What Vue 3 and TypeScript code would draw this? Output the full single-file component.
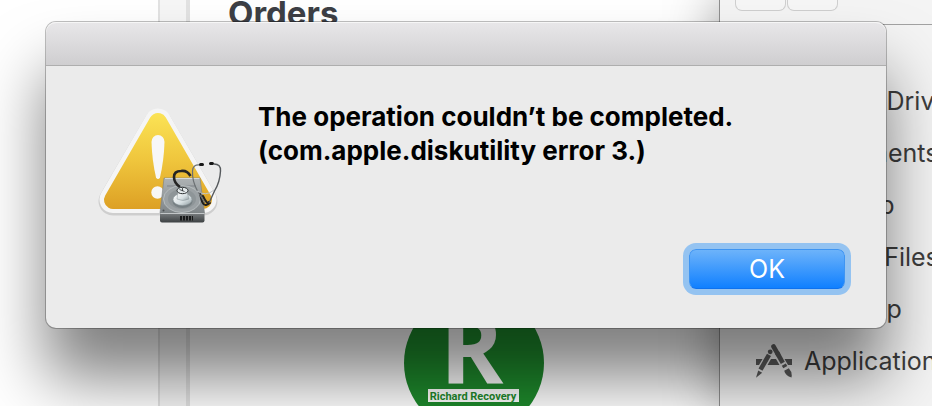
<script setup lang="ts">
import { ref } from 'vue'

const open = ref(true)
const places: string[] = ['iCloud Drive', 'Documents', 'AirDrop', 'All My Files', 'Desktop', 'Applications']
</script>

<template>
  <main class="desktop">
    <section class="browser">
      <div class="page-edge"></div>
      <div class="gutter"></div>
      <article class="page">
        <h2>Orders</h2>
        <svg class="brand" viewBox="0 0 140 140" role="img" aria-label="Richard Recovery">
          <circle cx="70" cy="70" r="70" fill="#1e8a2c" />
          <text x="36" y="91" class="brand-letter">R</text>
          <rect x="24" y="96" width="91" height="13" fill="#fff" />
          <text x="69" y="107" text-anchor="middle" class="brand-name">Richard Recovery</text>
        </svg>
      </article>
    </section>

    <aside class="finder">
      <div class="toolbar">
        <button type="button" aria-label="Back"></button>
        <button type="button" aria-label="Forward"></button>
      </div>
      <ul class="places">
        <li v-for="place in places" :key="place">
          <span class="place-icon">
            <svg v-if="place === 'Applications'" viewBox="0 0 36 34" aria-hidden="true">
              <g fill="#5c5c5c">
                <path d="M0 15h6.500L3 21H0zM15 15h5l3.500 6h-12zM28.500 15H36v6h-4z" />
                <circle cx="14.200" cy="7.800" r="2.400" />
                <path d="M2.200 26.500l4 2.300L0 33.800z" />
                <path d="M28.200 26.800l4.600-2.600Q36.500 28 35.500 33.500 29.500 32 28.200 26.800z" />
              </g>
              <g fill="none" stroke="#5c5c5c" stroke-width="4.600">
                <path d="M13 10.800L4.500 25.600M27.800 20.600L29.300 23.200" />
                <path d="M21 8.500L26.800 18.800" />
                <path d="M17.500 2.500L22 10.300" stroke-linecap="round" />
              </g>
            </svg>
          </span>
          <span>{{ place }}</span>
        </li>
      </ul>
    </aside>

    <section v-if="open" class="dialog" role="alertdialog" aria-labelledby="message">
      <header class="titlebar"></header>
      <div class="body">
        <div class="notice">
          <svg class="alert" viewBox="96 100 128 128" aria-hidden="true">
            <defs>
              <linearGradient id="warn" gradientUnits="userSpaceOnUse" x1="0" y1="113" x2="0" y2="209">
                <stop offset="0" stop-color="#fbe355" />
                <stop offset="0.500" stop-color="#efc53c" />
                <stop offset="1" stop-color="#dda024" />
              </linearGradient>
              <linearGradient id="metal" x1="0" y1="0" x2="0" y2="1">
                <stop offset="0" stop-color="#aeb3b5" />
                <stop offset="1" stop-color="#7f8588" />
              </linearGradient>
              <linearGradient id="front" x1="0" y1="0" x2="0" y2="1">
                <stop offset="0" stop-color="#777b7d" />
                <stop offset="1" stop-color="#3c4042" />
              </linearGradient>
              <linearGradient id="chrome" x1="0" y1="0" x2="1" y2="1">
                <stop offset="0" stop-color="#fff" />
                <stop offset="0.600" stop-color="#d5dee1" />
                <stop offset="1" stop-color="#8b979b" />
              </linearGradient>
            </defs>
            <g stroke-linejoin="round">
              <path d="M158 123L113 200H203Z" fill="none" stroke="#000" stroke-opacity=".12" stroke-width="29" transform="translate(0 1)" />
              <path d="M158 122L113 199.500H203Z" fill="#f5f5f5" stroke="#f5f5f5" stroke-width="27" />
              <path d="M158 122L113 200H203Z" fill="url(#warn)" stroke="url(#warn)" stroke-width="18" />
            </g>
            <path d="M151.500 142a6.500 7 0 0 1 13 0Q164 160 160 177.500q-2 3-4 0Q152 160 151.500 142z" fill="#f7f7f7" />
            <circle cx="157.500" cy="192.500" r="6.200" fill="#f7f7f7" />

            <path d="M164 178h36l4.500 35h-44.500z" fill="url(#metal)" stroke="#7a7f81" stroke-width=".6" />
            <path d="M165 178.500h34.500" stroke="#d5d9da" stroke-width="1" />
            <path d="M167 186h29" stroke="#8b9194" stroke-width="1.500" />
            <ellipse cx="182" cy="199" rx="18.500" ry="13.500" fill="#9ba1a4" stroke="#b6bcbe" stroke-width="1" />
            <ellipse cx="182" cy="199" rx="14" ry="10" fill="#8e9598" />
            <circle cx="163.500" cy="210.500" r="1" fill="#4c5052" />
            <path d="M160 213.500h44.500v7q0 2-2 2H162q-2 0-2-2z" fill="url(#front)" />
            <path d="M160.500 213.500h43.500" stroke="#c2c6c8" stroke-width="1" />
            <path d="M180 216h13v4.500h-13z" fill="#161819" />
            <path d="M182.500 216v4.500M185.500 216v4.500M188.500 216v4.500M191.500 216v4.500" stroke="#777" stroke-width=".7" />

            <path d="M180 187Q174 183 174 177T181 171Q187 170 190.500 176" fill="none" stroke="#242424" stroke-width="2.600" />
            <ellipse cx="182.500" cy="201.500" rx="10" ry="6.500" fill="#606b6f" opacity=".5" />
            <ellipse cx="182.500" cy="199.500" rx="9.500" ry="6" fill="url(#chrome)" stroke="#8b979b" stroke-width=".5" />
            <path d="M178 192h9l2 7q-6 3-12 0z" fill="url(#chrome)" stroke="#8b979b" stroke-width=".5" />
            <ellipse cx="182.500" cy="190.500" rx="5.500" ry="3.200" fill="#e3e9eb" stroke="#2b2f31" stroke-width="1" />
            <path d="M182.500 188v3M179.500 189.500l5 2" stroke="#2b2f31" stroke-width=".8" />

            <path d="M200 193Q202 206 206 205T209 202M203 196Q207 205 210 203" fill="none" stroke="#202020" stroke-width="2" stroke-linecap="round" />
            <path d="M200 165Q193 164 192.500 171Q192 181 197.500 191L205 203" fill="none" stroke="#6c7174" stroke-width="1.200" />
            <path d="M214 164Q221 164 220.500 171Q220 182 214.500 191L209 203" fill="none" stroke="#55595c" stroke-width="1.400" />
            <path d="M197 191Q206 197 214 190" fill="none" stroke="#bfc4c6" stroke-width="1" />
            <path d="M200.500 164.500h2M210.500 163.500h2" stroke="#161616" stroke-width="3" stroke-linecap="round" />
          </svg>
          <p id="message">The operation couldn’t be completed.<br />(com.apple.diskutility error 3.)</p>
        </div>
        <button type="button" class="ok" @click="open = false">OK</button>
      </div>
    </section>
  </main>
</template>

<style>
body {
  background: #fff;
}
</style>

<style scoped>
.desktop {
  position: relative;
  box-sizing: border-box;
  height: 100vh;
  padding: 22px 46px;
  overflow: hidden;
  font-family: Inter, "Liberation Sans", sans-serif;
}

.browser {
  position: absolute;
  inset: 0 212px 0 0;
  display: grid;
  grid-template-columns: 158px 32px 1fr;
  background: #fff;
}

.gutter {
  box-sizing: border-box;
  border-left: 2px solid #e2e2e2;
  border-right: 4px solid #e2e2e2;
  background: #f6f6f6;
}

.page {
  padding-left: 38px;
}

.page h2 {
  margin: 0;
  color: #3d3f45;
  font-size: 33px;
  font-weight: 700;
  line-height: 26px;
}

.brand {
  display: block;
  width: 140px;
  height: 140px;
  margin: 267px 0 0 176px;
}

.brand-letter {
  fill: #fff;
  font: 700 96px "Open Sans", sans-serif;
}

.brand-name {
  fill: #1e8a2c;
  font: 700 11px Roboto, sans-serif;
}

.finder {
  position: absolute;
  top: 0;
  right: 0;
  bottom: 0;
  width: 212px;
  border-left: 1px solid #8e8e8e;
  background: #f4f4f4;
  box-shadow: 0 0 50px rgba(0, 0, 0, 0.4);
}

.toolbar {
  display: flex;
  gap: 1px;
  height: 24px;
  padding-left: 15px;
  border-bottom: 1px solid #a2a2a2;
}

.toolbar button {
  box-sizing: border-box;
  width: 51px;
  height: 11px;
  padding: 0;
  border: 1px solid #cfcfcf;
  border-top: 0;
  border-radius: 0 0 7px 7px;
  background: #f6f6f6;
}

.places {
  margin: 0;
  padding: 50px 0 0 36px;
  overflow: hidden;
  list-style: none;
}

.places li {
  display: flex;
  gap: 12px;
  align-items: center;
  height: 52px;
  color: #3d3d3d;
  font-size: 25px;
  white-space: nowrap;
}

.place-icon {
  flex: none;
  width: 36px;
  height: 34px;
}

.place-icon svg {
  display: block;
  width: 100%;
}

.dialog {
  position: relative;
  border-radius: 10px;
  background: #ebebeb;
  box-shadow: 0 0 0 1px rgba(0, 0, 0, 0.25), 0 50px 64px rgba(0, 0, 0, 0.5);
}

.titlebar {
  height: 43px;
  border-bottom: 1px solid #aeaeae;
  border-radius: 10px 10px 0 0;
  background: linear-gradient(#e8e7e9, #cfced0);
  box-shadow: inset 0 1px #f6f6f6;
}

.body {
  display: flex;
  flex-direction: column;
  gap: 21px;
  padding: 34px 41px 39px 50px;
}

.notice {
  display: flex;
  gap: 34px;
}

.alert {
  flex: none;
  width: 128px;
  height: 128px;
}

.notice p {
  margin: 0;
  color: #000;
  font-size: 26px;
  font-weight: 700;
  line-height: 34px;
}

.ok {
  align-self: flex-end;
  width: 156px;
  height: 40px;
  padding: 0;
  border: 1px solid #3f95f2;
  border-bottom-color: #0f72ee;
  border-radius: 7px;
  background: linear-gradient(#6db3fa, #1080ff);
  box-shadow: 0 0 0 6px #94c3f1;
  color: #fff;
  font-family: inherit;
  font-size: 25px;
}
</style>
